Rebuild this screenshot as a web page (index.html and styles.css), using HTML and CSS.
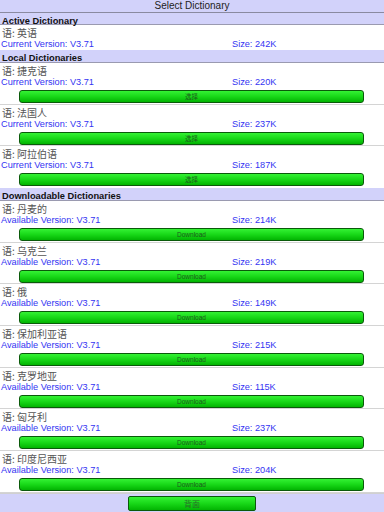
FILE: index.html
```html
<!DOCTYPE html>
<html>
<head>
<meta charset="utf-8">
<link rel="stylesheet" href="styles.css">
</head>
<body>
<div class="page">
<div class="title">Select Dictionary</div>
<div class="section first">Active Dictionary</div>
<div class="row active">
  <div class="name">语: 英语</div>
  <div class="ver"><span class="vlabel">Current Version: V3.71</span><span>Size: 242K</span></div>
</div>
<div class="section">Local Dictionaries</div>
<div class="row">
  <div class="name">语: 捷克语</div>
  <div class="ver"><span class="vlabel">Current Version: V3.71</span><span>Size: 220K</span></div>
  <div class="btn">选择</div>
</div>
<div class="row">
  <div class="name">语: 法国人</div>
  <div class="ver"><span class="vlabel">Current Version: V3.71</span><span>Size: 237K</span></div>
  <div class="btn">选择</div>
</div>
<div class="row last">
  <div class="name">语: 阿拉伯语</div>
  <div class="ver"><span class="vlabel">Current Version: V3.71</span><span>Size: 187K</span></div>
  <div class="btn">选择</div>
</div>
<div class="section">Downloadable Dictionaries</div>
<div class="row">
  <div class="name">语: 丹麦的</div>
  <div class="ver"><span class="vlabel">Available Version: V3.71</span><span>Size: 214K</span></div>
  <div class="btn">Download</div>
</div>
<div class="row">
  <div class="name">语: 乌克兰</div>
  <div class="ver"><span class="vlabel">Available Version: V3.71</span><span>Size: 219K</span></div>
  <div class="btn">Download</div>
</div>
<div class="row">
  <div class="name">语: 俄</div>
  <div class="ver"><span class="vlabel">Available Version: V3.71</span><span>Size: 149K</span></div>
  <div class="btn">Download</div>
</div>
<div class="row">
  <div class="name">语: 保加利亚语</div>
  <div class="ver"><span class="vlabel">Available Version: V3.71</span><span>Size: 215K</span></div>
  <div class="btn">Download</div>
</div>
<div class="row">
  <div class="name">语: 克罗地亚</div>
  <div class="ver"><span class="vlabel">Available Version: V3.71</span><span>Size: 115K</span></div>
  <div class="btn">Download</div>
</div>
<div class="row">
  <div class="name">语: 匈牙利</div>
  <div class="ver"><span class="vlabel">Available Version: V3.71</span><span>Size: 237K</span></div>
  <div class="btn">Download</div>
</div>
<div class="row">
  <div class="name">语: 印度尼西亚</div>
  <div class="ver"><span class="vlabel">Available Version: V3.71</span><span>Size: 204K</span></div>
  <div class="btn">Download</div>
</div>
<div class="footer"><div class="backbtn">背面</div></div>
</div>
</body>
</html>
```
FILE: styles.css
```css
html, body {
  margin: 0;
  padding: 0;
  width: 384px;
  height: 512px;
  overflow: hidden;
  background: #fff;
  font-family: "Liberation Sans", Arial, "Noto Sans CJK SC", sans-serif;
}
.page {
  display: flex;
  flex-direction: column;
  height: 512px;
}
.title {
  flex: none;
  height: 12px;
  line-height: 12px;
  font-size: 10px;
  text-align: center;
  background: #d2d2fa;
  color: #222;
  border-bottom: 1px solid #8a8aa0;
}
.section {
  flex: none;
  height: 10px;
  padding-top: 2px;
  line-height: 12px;
  font-size: 9.3px;
  font-weight: bold;
  background: #d2d2fa;
  color: #111;
  padding-left: 2px;
  border-bottom: 1px solid #9a9ab0;
}
.section.first {
  height: 9px;
}
.row {
  flex: none;
  height: 38.67px;
  padding-top: 2px;
  border-bottom: 1px solid #d4d4d4;
  box-sizing: content-box;
}
.row.last {
  height: 39.67px;
  border-bottom: none;
}
.row.active {
  height: 23px;
  border-bottom: none;
}
.name {
  height: 12px;
  line-height: 12px;
  font-size: 10px;
  color: #555;
  padding-left: 2px;
  font-family: "Noto Sans CJK SC", sans-serif;
}
.ver {
  height: 11px;
  line-height: 11px;
  font-size: 9.2px;
  color: #3434f2;
  display: flex;
  padding-left: 1px;
}
.vlabel {
  width: 231px;
}
.btn {
  margin: 2px 20px 0 19px;
  height: 11px;
  line-height: 11px;
  font-size: 6.5px;
  text-align: center;
  color: #1d5a1d;
  border: 1px solid #0a5a0a;
  border-radius: 3px;
  background: linear-gradient(#34f234, #18d818 50%, #02b402);
  font-family: "Liberation Sans", "Noto Sans CJK SC", sans-serif;
}
.footer {
  flex: 1;
  background: #d2d2fa;
  border-top: 1px solid #d0d0d0;
  display: flex;
  justify-content: center;
  padding-top: 2px;
  box-sizing: border-box;
}
.backbtn {
  width: 126px;
  height: 13px;
  line-height: 13px;
  font-size: 8px;
  text-align: center;
  color: #2a6a2a;
  border: 1px solid #0a5a0a;
  border-radius: 2px;
  background: linear-gradient(#34f234, #18d818 50%, #02b402);
  font-family: "Noto Sans CJK SC", sans-serif;
}
```
